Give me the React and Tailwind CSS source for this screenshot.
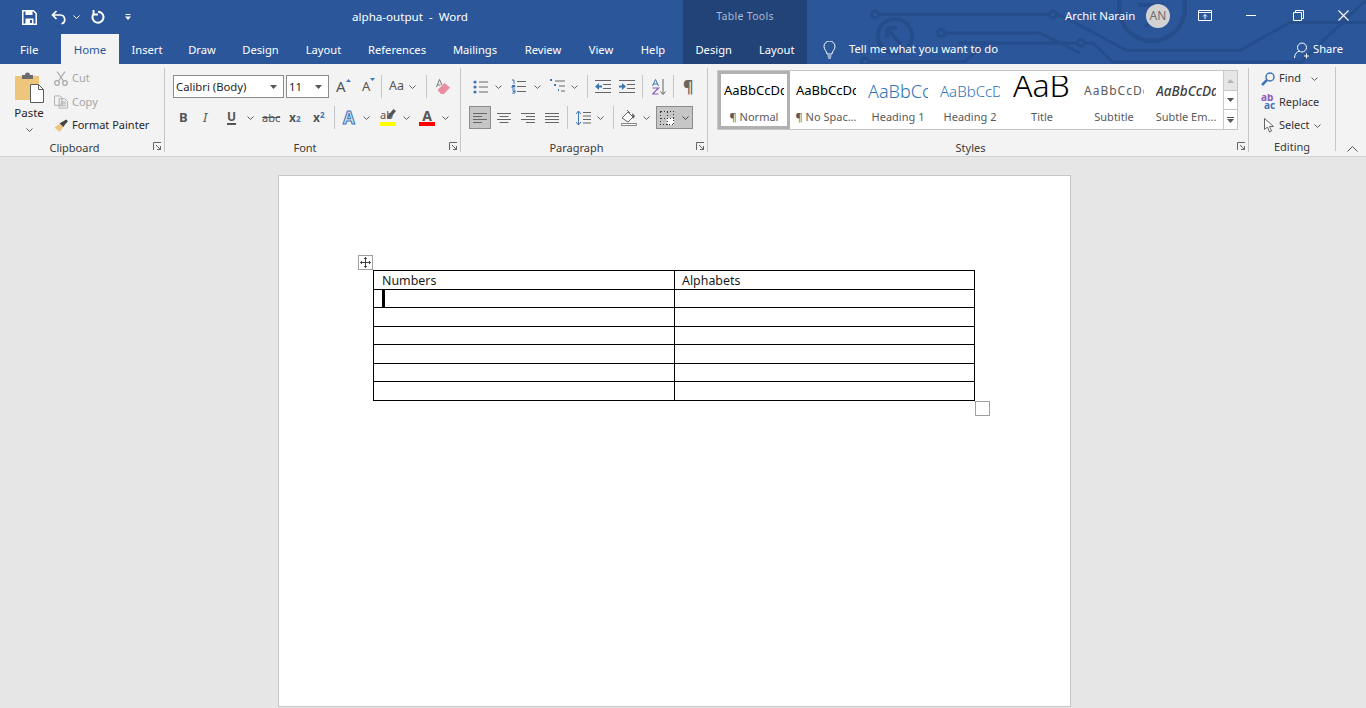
const Chev = ({ className = '', color = '#5f5f5f' }) => (
  <svg width="7" height="4" viewBox="0 0 7 4" className={`shrink-0 ${className}`} fill="none" stroke={color}>
    <path d="M.5.5l3 3 3-3" />
  </svg>
);

const Tri = ({ className = '' }) => (
  <svg width="7" height="4" viewBox="0 0 7 4" className={`shrink-0 ${className}`} fill="#555">
    <path d="M0 0h7L3.500 4z" />
  </svg>
);

const VLine = ({ className = '' }) => <div className={`h-[23px] w-px shrink-0 bg-[#c6c6c6] ${className}`} />;

const Lines = ({ rows }) => rows.map((r, i) => <path key={i} d={r} stroke="#666" strokeWidth="1" fill="none" />);

function CircuitBg() {
  return (
    <svg className="absolute left-[807px] top-0" width="559" height="64" viewBox="807 0 559 64" fill="none" stroke="#264d8b" strokeWidth="3">
      <circle cx="875" cy="14.5" r="3.5" />
      <path d="M879 14.5h170" />
      <circle cx="1053" cy="14.5" r="3.5" />
      <path d="M1057 14.5l8 3 62 33h113l50-28h76" />
      <circle cx="895" cy="36" r="17" strokeWidth="4" />
      <path d="M887 28l14 16M887 28h10M887 28v10" strokeWidth="4" />
      <circle cx="941" cy="33" r="3.5" />
      <path d="M945 33h95l40 20" />
      <path d="M958 43h119" />
      <circle cx="1081" cy="43" r="3.5" />
      <path d="M1085 43h8l20 19h188l65-62" />
      <path d="M869 61.500h96l20-18" />
      <circle cx="865" cy="61.500" r="3.500" />
      <circle cx="1152" cy="8" r="33" strokeWidth="4.500" />
      <path d="M1138 5h22l-14 22" strokeWidth="4" />
    </svg>
  );
}

function TitleBar() {
  return (
    <div className="flex h-9 items-center text-white">
      <div className="mb-0.5 flex items-center">
        <svg width="15" height="15" viewBox="0 0 15 15" className="ml-[22px] shrink-0" fill="none">
          <path d="M.8.800h10.700l2.700 2.700v10.700H.8z" stroke="#fff" strokeWidth="1.500" />
          <path d="M3.500 1h7v4h-7zM3.500 8.500h8V14h-8z" fill="#fff" />
          <path d="M8 10h2v3H8z" fill="#2b579a" />
        </svg>
        <svg width="16" height="15" viewBox="0 0 16 15" className="ml-[14px] shrink-0" fill="none" stroke="#fff" strokeWidth="1.700">
          <path d="M5.500 1L1.500 5l4 4M1.500 5h8a4.500 4.500 0 0 1 1 8.800" />
        </svg>
        <Chev color="#fff" className="ml-[6px]" />
        <svg width="14" height="14" viewBox="0 0 14 14" className="ml-[11px] shrink-0" fill="none" stroke="#fff" strokeWidth="2">
          <path d="M7 1.700a5.500 5.500 0 1 1-4.800 2.800M2.500 0v4.500H7" />
        </svg>
        <svg width="6" height="6" viewBox="0 0 6 6" className="ml-5 shrink-0" fill="#fff">
          <path d="M.5 0h5v1h-5zM0 2.500h6L3 6z" />
        </svg>
      </div>
      <div className="mb-0.5 ml-[221px] w-[331px] whitespace-pre text-[11.6px]">alpha-output  -  Word</div>
      <div className="flex h-full w-[124px] items-center justify-center bg-[#224378] pb-[3px] text-[10.5px] tracking-[0.3px] text-[#a9b9d2]">Table Tools</div>
      <div className="mb-1 ml-[258px] w-[81px] text-[11.4px]">Archit Narain</div>
      <div className="mb-[5px] flex size-6 items-center justify-center rounded-full bg-[#d2d2d2] text-[12px] text-[#6f6f6f]">AN</div>
      <div className="mb-[6px] flex items-center">
        <svg width="14" height="11" viewBox="0 0 14 11" className="ml-[28px] shrink-0" fill="none" stroke="#fff">
          <path d="M.5.500h13v10H.5zM.5 2.500h13M7 9V4.500M5 6.500l2-2 2 2" />
        </svg>
        <div className="ml-[34px] h-px w-2.5 bg-white" />
        <svg width="11" height="11" viewBox="0 0 11 11" className="ml-[37px] shrink-0" fill="none" stroke="#fff">
          <path d="M.5 2.500h8v8h-8zM2.500 2.500V.5h8v8h-2" />
        </svg>
        <svg width="11" height="11" viewBox="0 0 11 11" className="ml-[34px] shrink-0" fill="none" stroke="#fff" strokeWidth="1.100">
          <path d="M.5.500l10 10M10.500.500l-10 10" />
        </svg>
      </div>
    </div>
  );
}

function TabBar() {
  const tabs = [
    ['Insert', 'w-[56px]'],
    ['Draw', 'w-[54px]'],
    ['Design', 'w-[63px]'],
    ['Layout', 'w-[63px]'],
    ['References', 'w-[84px]'],
    ['Mailings', 'w-[72px]'],
    ['Review', 'w-[64px]'],
    ['View', 'w-[52px]'],
    ['Help', 'w-[52px]'],
  ];
  return (
    <div className="flex h-7 items-center text-[11.2px] text-white">
      <div className="ml-5 w-[41px] pb-px text-[11.5px]">File</div>
      <div className="-mt-0.5 flex h-[30px] w-[58px] items-center justify-center bg-[#f3f3f3] pt-0.5 text-[11.5px] text-[#2b579a]">Home</div>
      <div className="flex w-[564px]">
        {tabs.map(([t, w]) => (
          <div key={t} className={`${w} whitespace-nowrap text-center`}>{t}</div>
        ))}
      </div>
      <div className="flex h-full w-[124px] items-center justify-center gap-[27px] bg-[#224378]">
        <span>Design</span>
        <span>Layout</span>
      </div>
      <svg width="13" height="18" viewBox="0 0 13 18" className="ml-[16px] shrink-0" fill="none" stroke="#fff">
        <path d="M4 13c0-3-3-4-3-7.500a5.500 5.500 0 0 1 11 0C12 9 9 10 9 13zM4.500 15h4M5 17h3" />
      </svg>
      <div className="ml-[13px] w-[445px] whitespace-nowrap pb-px text-[11.3px]">Tell me what you want to do</div>
      <svg width="16" height="17" viewBox="0 0 16 17" className="shrink-0" fill="none" stroke="#fff">
        <circle cx="8" cy="5.500" r="4.500" />
        <path d="M.5 16c0-4 2.500-6.500 5-7M10 14h5M12.500 11.500v5" />
      </svg>
      <div className="ml-[3px] pb-0.5 text-[11.2px]">Share</div>
    </div>
  );
}

function Group({ className, label, launcher = true, children }) {
  return (
    <div className={`shrink-0 pt-1 ${className}`}>
      <div className="h-[84px] border-r border-[#c6c6c6]">
        <div className="h-[72px]">{children}</div>
        <div className={`relative h-[15px] text-center text-[11px] leading-[15px] text-[#3a3a3a] ${launcher ? 'pr-[15px]' : ''}`}>
          {label}
          {launcher && (
            <svg width="9" height="9" viewBox="0 0 9 9" className="absolute right-[2px] top-0.5" fill="none" stroke="#666">
              <path d="M.5 8V.5H8M3 3l4.500 4.500M4 7.500h3.500V4" />
            </svg>
          )}
        </div>
      </div>
    </div>
  );
}

function Clipboard() {
  return (
    <Group className="w-[165px]" label="Clipboard">
      <div className="flex">
        <div className="flex w-[54px] flex-col items-center pl-1">
          <svg width="29" height="31" viewBox="0 0 29 31" className="mt-[4px] shrink-0">
            <path d="M0 4h24v24H0z" fill="#edc67c" />
            <path d="M7 3h3a2.500 2.500 0 0 1 5 0h3v4H7z" fill="#6b6b6b" />
            <path d="M15.500 12.500h8l5 5v13h-13z" fill="#fff" stroke="#5b5b5b" />
            <path d="M23.500 12.500v5h5" fill="none" stroke="#5b5b5b" />
          </svg>
          <div className="mt-[2px] text-[11.5px] leading-4 text-[#262626]">Paste</div>
          <Chev className="mt-[7px]" />
        </div>
        <div className="-mt-px text-[11px]">
          <div className="flex h-[23px] items-center text-[#a6a6a6]">
            <svg width="14" height="15" viewBox="0 0 14 15" className="shrink-0" fill="none" stroke="#ababab" strokeWidth="1.300">
              <circle cx="3" cy="12" r="2.300" />
              <circle cx="11" cy="12" r="2.300" />
              <path d="M4.500 10L11 .5M9.500 10L3 .5" />
            </svg>
            <span className="ml-1">Cut</span>
          </div>
          <div className="flex h-6 items-center text-[#a6a6a6]">
            <svg width="14" height="14" viewBox="0 0 15 14" className="shrink-0" fill="#f3f3f3" stroke="#ababab">
              <path d="M.5.500h6l2 2v8h-8zM5.500 3.500h6l3 3v7h-9zM7 7h6M7 9h6M7 11h6" />
            </svg>
            <span className="ml-1">Copy</span>
          </div>
          <div className="flex h-[23px] items-center text-[#262626]">
            <svg width="14" height="14" viewBox="0 0 15 14" className="shrink-0">
              <path d="M6 4.500L10 8l-4 5.500L.5 8.500z" fill="#edc67c" />
              <path d="M6 4l4 4 2-3 3-3-2-2-3 2z" fill="#444" />
            </svg>
            <span className="ml-1 whitespace-nowrap">Format Painter</span>
          </div>
        </div>
      </div>
    </Group>
  );
}

function Font() {
  return (
    <Group className="w-[296px]" label="Font">
      <div className="flex h-[30px] items-end pl-2 text-[11.3px] text-[#262626]">
        <div className="flex h-[23px] w-[111px] items-center justify-between border border-[#8c8c8c] bg-white pl-[2px] pr-1.5 pt-px">
          <span>Calibri (Body)</span>
          <Tri />
        </div>
        <div className="ml-0.5 flex h-[23px] w-[43px] items-center justify-between border border-[#8c8c8c] bg-white pl-[2px] pr-1.5 pt-px">
          <span>11</span>
          <Tri />
        </div>
        <div className="flex h-[23px] items-center">
          <span className="relative ml-[7px] w-[15px] text-[15px] leading-none text-[#555]">A<svg width="5" height="3" className="absolute right-0 top-0" fill="#3f76b5"><path d="M0 3L2.500 0 5 3z" /></svg></span>
          <span className="relative ml-[11px] w-[13px] text-[13px] leading-none text-[#555]">A<svg width="5" height="3" className="absolute right-0 -top-0.5" fill="#3f76b5"><path d="M0 0h5L2.500 3z" /></svg></span>
          <VLine className="ml-1.5" />
          <span className="ml-[7px] w-4 text-[12.5px] text-[#555]">Aa</span>
          <Chev className="ml-1" />
          <VLine className="ml-[10px]" />
          <svg width="16" height="16" viewBox="0 0 16 16" className="ml-2 shrink-0">
            <path d="M1.500 8L4.500.5 7 6M2.500 6h3" fill="none" stroke="#777" />
            <path d="M2.500 11l6-6 1-1 5.500 4.500-6 6.500H6z" fill="#e88ea0" />
          </svg>
        </div>
      </div>
      <div className="mt-2 flex h-[23px] items-center pl-[14px] text-[#555]">
        <span className="w-2 text-[13px] font-bold">B</span>
        <span className="ml-4 w-2 text-[13px] italic">I</span>
        <span className="ml-4 w-[9px] border-b-2 border-[#555] text-[12px] font-bold leading-[13px]">U</span>
        <Chev className="ml-[11px]" />
        <span className="ml-2 w-4 text-[11px] leading-none line-through">abc</span>
        <span className="ml-[11px] w-[13px] text-[12px] font-bold">x<span className="text-[8px] text-[#3f76b5]">2</span></span>
        <span className="ml-[11px] w-[13px] text-[12px] font-bold">x<sup className="text-[8px] text-[#3f76b5]">2</sup></span>
        <VLine className="ml-2" />
        <span className="ml-2 w-[15px] text-[17px] font-bold leading-none text-[#cfe0f3] [-webkit-text-stroke:1px_#3f76b5]">A</span>
        <Chev className="ml-[5px]" />
        <div className="relative ml-[10px] flex w-4 flex-col">
          <span className="h-[13px] text-[11px] leading-3">ab</span>
          <svg width="9" height="11" viewBox="0 0 9 11" className="absolute right-0 top-0" fill="#555"><path d="M6.500 0L9 2 3 9.500H.5V7z" /></svg>
          <span className="h-1 bg-[#ffff00]" />
        </div>
        <Chev className="ml-[7px]" />
        <div className="ml-[9px] flex w-4 flex-col items-center">
          <span className="h-[13px] text-[14px] font-bold leading-[13px]">A</span>
          <span className="h-1 w-4 bg-[#ff0000]" />
        </div>
        <Chev className="ml-[7px]" />
      </div>
    </Group>
  );
}

function ListIcon({ color, className = '' }) {
  return (
    <svg width="15" height="14" viewBox="0 0 15 14" className={`shrink-0 ${className}`}>
      <circle cx="2" cy="2" r="1.600" fill={color} />
      <circle cx="2" cy="7" r="1.600" fill={color} />
      <circle cx="2" cy="12" r="1.600" fill={color} />
      <Lines rows={['M6 2h9', 'M6 7h9', 'M6 12h9']} />
    </svg>
  );
}

function Para() {
  return (
    <Group className="w-[247px]" label="Paragraph">
      <div className="flex h-[30px] items-end pl-3">
        <div className="flex h-[23px] items-center">
          <ListIcon color="#3f76b5" />
          <Chev className="ml-[7px]" />
          <svg width="15" height="15" viewBox="0 0 15 15" className="ml-[9px] shrink-0">
            <path d="M1 1h2v4M1 6.500h3v1H1v1.500h3M1 11h3v1.500H2h2V14H1" fill="none" stroke="#3f76b5" />
            <Lines rows={['M6 2.500h9', 'M6 7.500h9', 'M6 12.500h9']} />
          </svg>
          <Chev className="ml-[8px]" />
          <svg width="16" height="15" viewBox="0 0 16 15" className="ml-2 shrink-0">
            <path d="M1 1h2M5 6h2M9 11h1" stroke="#3f76b5" strokeWidth="2" />
            <Lines rows={['M6 2h10', 'M10 7h6', 'M12 12h4']} />
          </svg>
          <Chev className="ml-[6px]" />
          <VLine className="ml-[9px]" />
          <svg width="16" height="13" viewBox="0 0 16 13" className="ml-[7px] shrink-0">
            <Lines rows={['M0 .5h16', 'M8 4.500h8', 'M8 8.500h8', 'M0 12.500h16']} />
            <path d="M0 6.500L4 3v2.500h3v2H4V10z" fill="#3f76b5" />
          </svg>
          <svg width="16" height="13" viewBox="0 0 16 13" className="ml-2 shrink-0">
            <Lines rows={['M0 .5h16', 'M8 4.500h8', 'M8 8.500h8', 'M0 12.500h16']} />
            <path d="M7 6.500L3 3v2.500H0v2h3V10z" fill="#3f76b5" />
          </svg>
          <VLine className="ml-[7px]" />
          <svg width="15" height="16" viewBox="0 0 15 16" className="ml-[9px] shrink-0">
            <path d="M.5 7L3.500.5 6.500 7M1.500 5h4" fill="none" stroke="#3f76b5" />
            <path d="M.5 9h6l-6 6h6" fill="none" stroke="#8e5bb5" strokeWidth="1.200" />
            <path d="M11 0v15M8.500 12.500l2.500 3 2.500-3" fill="none" stroke="#666" />
          </svg>
          <VLine className="ml-1.5" />
          <span className="mb-0.5 ml-[9px] text-[16px] font-bold leading-none text-[#666]">¶</span>
        </div>
      </div>
      <div className="mt-2 flex h-[23px] items-center pl-2">
        <div className="flex h-[23px] w-[22px] items-center justify-center border border-[#8c8c8c] bg-[#c6c6c6]">
          <svg width="14" height="10" viewBox="0 0 14 10"><Lines rows={['M0 .5h14', 'M0 3.500h9', 'M0 6.500h14', 'M0 9.500h9']} /></svg>
        </div>
        <svg width="14" height="10" viewBox="0 0 14 10" className="ml-1.5 shrink-0"><Lines rows={['M0 .5h14', 'M2.500 3.500h9', 'M0 6.500h14', 'M2.500 9.500h9']} /></svg>
        <svg width="14" height="10" viewBox="0 0 14 10" className="ml-2.5 shrink-0"><Lines rows={['M0 .5h14', 'M5 3.500h9', 'M0 6.500h14', 'M5 9.500h9']} /></svg>
        <svg width="14" height="10" viewBox="0 0 14 10" className="ml-2.5 shrink-0"><Lines rows={['M0 .5h14', 'M0 3.500h14', 'M0 6.500h14', 'M0 9.500h14']} /></svg>
        <VLine className="ml-2" />
        <svg width="15" height="16" viewBox="0 0 15 16" className="ml-2 shrink-0">
          <path d="M2.500 1v14M0 4l2.500-3L5 4M0 12l2.500 3L5 12" fill="none" stroke="#3f76b5" />
          <Lines rows={['M7 2.500h8', 'M7 6h8', 'M7 9.500h8', 'M7 13h8']} />
        </svg>
        <Chev className="ml-[6px]" />
        <VLine className="ml-[9px]" />
        <svg width="16" height="16" viewBox="0 0 16 16" className="ml-[7px] shrink-0">
          <path d="M1 8l6-6 5 5-5 5z" fill="#fff" stroke="#666" />
          <path d="M6 0l3 3" stroke="#666" />
          <path d="M11 3l3 3-2 3z" fill="#555" />
          <path d="M.5 13.500h15v2H.5z" fill="#fff" stroke="#888" />
        </svg>
        <Chev className="ml-[6px]" />
        <div className="ml-1.5 flex h-[23px] w-[37px] items-center border border-[#8c8c8c] bg-[#c6c6c6] pl-[3px]">
          <svg width="14" height="14" viewBox="0 0 14 14" fill="none" stroke="#333" strokeDasharray="1 2" shapeRendering="crispEdges">
            <path d="M7 7h6.500v6.500H7z" fill="#fff" stroke="none" />
            <path d="M.5.5h13v13H.5z" />
            <path d="M7 .5v13M.5 7h13" />
          </svg>
          <Chev className="ml-[8px]" color="#444" />
        </div>
      </div>
    </Group>
  );
}

function StyleItem({ label, preview, selected }) {
  return (
    <div className={`flex h-[58px] w-[72px] shrink-0 flex-col items-center border-[3px] ${selected ? 'border-[#b1b1b1]' : 'border-transparent'}`}>
      <div className="flex h-[34px] w-[60px] items-center overflow-hidden whitespace-nowrap">{preview}</div>
      <div className="mt-px w-full whitespace-nowrap text-center text-[11px] leading-4 text-[#5a5a5a]">{label}</div>
    </div>
  );
}

function Styles() {
  return (
    <Group className="w-[541px]" label="Styles">
      <div className="pl-[9px] pt-[2px]">
        <div className="flex h-[60px] w-[521px] border border-[#c6c6c6] bg-white">
          <StyleItem selected label="¶ Normal" preview={<span className="text-[13px] text-black">AaBbCcDd</span>} />
          <StyleItem label="¶ No Spac..." preview={<span className="text-[13px] text-black">AaBbCcDd</span>} />
          <StyleItem label="Heading 1" preview={<span className="text-[18px] font-light text-[#2e74b5]">AaBbCcDd</span>} />
          <StyleItem label="Heading 2" preview={<span className="text-[15px] font-light text-[#2e74b5]">AaBbCcDd</span>} />
          <StyleItem
            label="Title"
            preview={
              <div className="ml-px mt-[-9px] h-[21px] self-center overflow-hidden">
                <div className="-mt-[12px] text-[32px] font-light leading-[42px] text-black">AaB</div>
              </div>
            }
          />
          <StyleItem label="Subtitle" preview={<span className="text-[12px] tracking-[1px] text-[#5a5a5a]">AaBbCcDd</span>} />
          <StyleItem label="Subtle Em..." preview={<span className="text-[13.5px] font-medium italic text-[#404040]">AaBbCcDd</span>} />
          <div className="ml-auto flex w-[14px] flex-col border-l border-[#c6c6c6]">
            <div className="flex h-[20px] items-center justify-center border-b border-[#c6c6c6] bg-[#e6e6e6]">
              <svg width="7" height="4" fill="#b5b5b5"><path d="M0 4L3.500 0 7 4z" /></svg>
            </div>
            <div className="flex h-[19px] items-center justify-center border-b border-[#c6c6c6]"><Tri /></div>
            <div className="flex flex-1 flex-col items-center justify-center gap-px">
              <div className="h-px w-[7px] bg-[#555]" />
              <Tri />
            </div>
          </div>
        </div>
      </div>
    </Group>
  );
}

function Editing() {
  return (
    <Group className="w-[87px]" label="Editing" launcher={false}>
      <div className="-mt-px pl-3 text-[11px] text-[#333]">
        <div className="flex h-[23px] items-center">
          <svg width="14" height="14" viewBox="0 0 14 14" className="shrink-0" fill="none" stroke="#3f76b5" strokeWidth="1.500">
            <circle cx="9" cy="5" r="4" />
            <path d="M6 8l-5 5" strokeWidth="2.500" />
          </svg>
          <span className="ml-1">Find</span>
          <Chev className="ml-2.5" />
        </div>
        <div className="flex h-6 items-center">
          <svg width="16" height="16" viewBox="0 0 16 16" className="shrink-0" fontFamily="Noto Sans" fontSize="10" fontWeight="700">
            <text x="0" y="7" fill="#8e5bb5">ab</text>
            <text x="3" y="15" fill="#3f76b5">ac</text>
          </svg>
          <span className="ml-0.5">Replace</span>
        </div>
        <div className="flex h-[23px] items-center">
          <svg width="11" height="15" viewBox="0 0 11 15" className="ml-[3px] shrink-0" fill="#fff" stroke="#666">
            <path d="M.5.500v11l3-2.500 2 5 2-1-2-4.500h4z" />
          </svg>
          <span className="ml-1">Select</span>
          <Chev className="ml-1" />
        </div>
      </div>
    </Group>
  );
}

function Ribbon() {
  return (
    <div className="flex h-[93px] border-b border-[#d2d2d2] bg-[#f3f3f3]">
      <Clipboard />
      <Font />
      <Para />
      <Styles />
      <Editing />
      <svg width="11" height="6" viewBox="0 0 11 6" className="ml-[11px] mt-[82px] shrink-0" fill="none" stroke="#555">
        <path d="M.5 5.500l5-5 5 5" />
      </svg>
    </div>
  );
}

function DocTable() {
  const rows = ['h-[18px]', 'h-[19px]', 'h-[18px]', 'h-[19px]', 'h-[18px]', 'h-[19px]'];
  return (
    <div className="relative w-[602px]">
      <div className="absolute -left-[15px] -top-[15px] flex size-[15px] items-center justify-center border border-[#a0a0a0] bg-white">
        <svg width="11" height="11" viewBox="0 0 11 11" fill="none" stroke="#444">
          <path d="M5.500 0v11M0 5.500h11M4 1.500h3M4 9.500h3M1.500 4v3M9.500 4v3" />
        </svg>
      </div>
      <table className="w-full table-fixed border-collapse text-[12.4px] text-[#1a1a1a]">
        <tbody>
          <tr className="h-[18px]">
            <td className="w-[301px] border border-black px-2 pb-0 pt-px leading-[17px]">Numbers</td>
            <td className="border border-black pb-0 pl-[7px] pt-px leading-[17px]">Alphabets</td>
          </tr>
          {rows.map((h, i) => (
            <tr key={i} className={h}>
              <td className="border border-black px-2 py-0">
                {i === 0 && <div className="h-[17px] w-[3px] bg-black" />}
              </td>
              <td className="border border-black p-0" />
            </tr>
          ))}
        </tbody>
      </table>
      <div className="absolute -bottom-[15px] -right-[15px] size-[15px] border border-[#a0a0a0] bg-white" />
    </div>
  );
}

export default function App() {
  return (
    <div className="h-[708px] w-[1366px] overflow-hidden bg-[#e6e6e6] font-['Noto_Sans',sans-serif]">
      <div className="relative bg-[#2b579a]">
        <CircuitBg />
        <div className="relative">
          <TitleBar />
          <TabBar />
        </div>
      </div>
      <Ribbon />
      <div className="ml-[278px] mt-[18px] h-[532px] w-[793px] border border-[#c6c6c6] bg-white pl-[94px] pt-[94px]">
        <DocTable />
      </div>
    </div>
  );
}
